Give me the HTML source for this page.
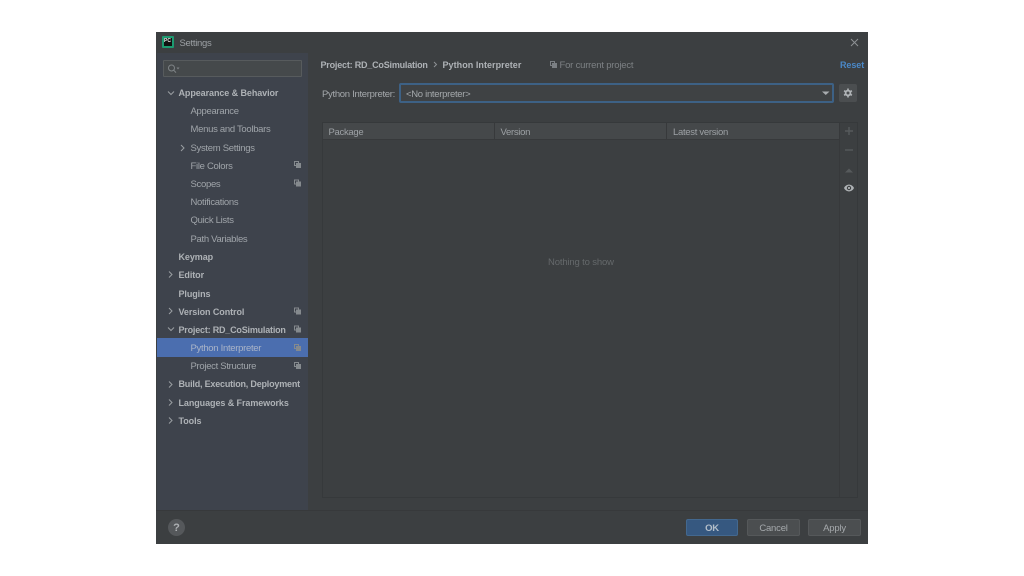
<!DOCTYPE html>
<html><head><meta charset="utf-8">
<style>
html,body{margin:0;padding:0;background:#fff;width:1024px;height:576px;overflow:hidden}
body{position:relative;font-family:"Liberation Sans","Noto Sans CJK KR",sans-serif;font-size:9.5px;color:#aab0b4}
.a{position:absolute}
.t{position:absolute;white-space:nowrap;line-height:12px;letter-spacing:-.3px;margin-top:1px;filter:blur(.25px)}
.b{font-weight:bold;font-size:9px;color:#aeb2b6;letter-spacing:-.08px;margin-top:0}
.s{color:#a0a5aa;margin-top:.5px}
svg{position:absolute;overflow:visible}
.btn{position:absolute;top:519px;height:17px;width:52px;border-radius:2px;background:#4b4e50;border:.5px solid #55585a;box-sizing:border-box;text-align:center;line-height:18px;color:#a5a9ac;letter-spacing:-.2px}
</style></head>
<body>
<div class="a" style="left:156px;top:32px;width:712px;height:512px;background:#3c3f41"></div>
<div class="a" style="left:157px;top:53px;width:151px;height:457px;background:#3e434c"></div>
<div class="a" style="left:156px;top:510px;width:712px;height:1px;background:#37393b"></div>

<div class="a" style="left:162px;top:36px;width:12px;height:12px;background:#1d9a70;border-radius:1px"></div>
<div class="a" style="left:164px;top:38px;width:8px;height:8px;background:#111;color:#eee;font-size:5px;font-weight:bold;line-height:6px;overflow:hidden">PC</div>
<div class="t" style="left:179.500px;top:37px;color:#9ca0a4">Settings</div>
<svg style="left:850px;top:38px" width="9" height="9"><path d="M1 1L8 8M8 1L1 8" stroke="#8d9194" stroke-width="1" fill="none"/></svg>

<div class="a" style="left:163px;top:60px;width:139px;height:17px;background:#45494b;border:1px solid #575b5d;box-sizing:border-box;border-radius:1px"></div>
<svg style="left:167px;top:64px" width="14" height="10"><circle cx="4.500" cy="4" r="3" stroke="#7f8487" stroke-width="1" fill="none"/><path d="M6.700 6.200L9 8.600" stroke="#7f8487"/><path d="M9.500 3.500h3l-1.500 2z" fill="#7f8487"/></svg>

<div class="a" style="left:157px;top:338px;width:151px;height:19px;background:#4b6eaf"></div>

<svg style="left:167px;top:89px" width="8" height="340" fill="none" stroke="#9a9ea2" stroke-width="1">
<path d="M1 2.500L4 5.500L7 2.500"/>
<path d="M2 182.500L5 185.500L2 188.500"/>
<path d="M2 219L5 222L2 225"/>
<path d="M1 238.500L4 241.500L7 238.500"/>
<path d="M2 292.500L5 295.500L2 298.500"/>
<path d="M2 310.500L5 313.500L2 316.500"/>
<path d="M2 328.500L5 331.500L2 334.500"/>
</svg>
<svg style="left:179px;top:144px" width="8" height="8" fill="none" stroke="#9a9ea2"><path d="M2 1L5 4L2 7"/></svg>

<div class="t b" style="left:178.500px;top:87px">Appearance &amp; Behavior</div>
<div class="t s" style="left:190.500px;top:105.500px">Appearance</div>
<div class="t s" style="left:190.500px;top:123.500px">Menus and Toolbars</div>
<div class="t s" style="left:190.500px;top:142px">System Settings</div>
<div class="t s" style="left:190.500px;top:160px">File Colors</div>
<div class="t s" style="left:190.500px;top:178px">Scopes</div>
<div class="t s" style="left:190.500px;top:196px">Notifications</div>
<div class="t s" style="left:190.500px;top:214.500px">Quick Lists</div>
<div class="t s" style="left:190.500px;top:233px">Path Variables</div>
<div class="t b" style="left:178.500px;top:251px">Keymap</div>
<div class="t b" style="left:178.500px;top:269px">Editor</div>
<div class="t b" style="left:178.500px;top:287.500px">Plugins</div>
<div class="t b" style="left:178.500px;top:305.500px">Version Control</div>
<div class="t b" style="left:178.500px;top:323.500px;letter-spacing:-.2px">Project: RD_CoSimulation</div>
<div class="t s" style="left:190.500px;top:342px;color:#aab4c8">Python Interpreter</div>
<div class="t s" style="left:190.500px;top:360px">Project Structure</div>
<div class="t b" style="left:178.500px;top:378px;letter-spacing:-.2px">Build, Execution, Deployment</div>
<div class="t b" style="left:178.500px;top:396.500px">Languages &amp; Frameworks</div>
<div class="t b" style="left:178.500px;top:415px">Tools</div>

<svg style="left:294px;top:161px" width="7" height="210" fill="none" stroke="#858a8e" stroke-width="1">
<g><rect x=".5" y=".5" width="4" height="4"/><rect x="2.500" y="2.500" width="4" height="4" fill="#858a8e"/></g>
<g transform="translate(0,18.500)"><rect x=".5" y=".5" width="4" height="4"/><rect x="2.500" y="2.500" width="4" height="4" fill="#858a8e"/></g>
<g transform="translate(0,146.500)"><rect x=".5" y=".5" width="4" height="4"/><rect x="2.500" y="2.500" width="4" height="4" fill="#858a8e"/></g>
<g transform="translate(0,164.500)"><rect x=".5" y=".5" width="4" height="4"/><rect x="2.500" y="2.500" width="4" height="4" fill="#858a8e"/></g>
<g transform="translate(0,183)"><rect x=".5" y=".5" width="4" height="4"/><rect x="2.500" y="2.500" width="4" height="4" fill="#858a8e"/></g>
<g transform="translate(0,201)"><rect x=".5" y=".5" width="4" height="4"/><rect x="2.500" y="2.500" width="4" height="4" fill="#858a8e"/></g>
</svg>

<div class="t b" style="left:320.500px;top:59px;letter-spacing:-.2px">Project: RD_CoSimulation</div>
<svg style="left:432px;top:61px" width="6" height="7" fill="none" stroke="#8d9194"><path d="M2 1L4.500 3.500L2 6"/></svg>
<div class="t b" style="left:442.500px;top:59px;letter-spacing:.05px">Python Interpreter</div>
<svg style="left:550px;top:61px" width="7" height="7" fill="none" stroke="#7b7f83"><rect x=".5" y=".5" width="4" height="4"/><rect x="2.500" y="2.500" width="4" height="4" fill="#7b7f83"/></svg>
<div class="t" style="left:559.500px;top:59px;color:#7d8184;letter-spacing:-.2px">For current project</div>
<div class="t b" style="left:840px;top:59px;color:#4a88c7">Reset</div>

<div class="t" style="left:322px;top:87.500px;color:#a5a9ac">Python Interpreter:</div>
<div class="a" style="left:399px;top:83px;width:435px;height:20px;box-sizing:border-box;border:2px solid #3d6185;border-radius:2px;background:#3f4244"></div>
<div class="t" style="left:406px;top:87.500px;color:#a5a9ac">&lt;No interpreter&gt;</div>
<svg style="left:822px;top:91px" width="8" height="5"><path d="M0 .5h7.500L3.750 4z" fill="#a8acaf"/></svg>
<div class="a" style="left:839px;top:84px;width:18px;height:18px;background:#4b4e50;border-radius:2px"></div>
<svg style="left:843px;top:88px" width="10" height="10"><path d="M5 .5v9M1.100 2.750l7.800 4.500M1.100 7.250l7.800-4.500" stroke="#b0b4b7" stroke-width="1.600"/><circle cx="5" cy="5" r="3.300" fill="#b0b4b7"/><circle cx="5" cy="5" r="1.500" fill="#4b4e50"/></svg>

<div class="a" style="left:322px;top:122px;width:536px;height:376px;box-sizing:border-box;border:1px solid #36393b"></div>
<div class="a" style="left:323px;top:123px;width:516px;height:17px;background:#45484a;border-bottom:1px solid #37393b;box-sizing:border-box"></div>
<div class="a" style="left:494px;top:123px;width:1px;height:17px;background:#37393b"></div>
<div class="a" style="left:666px;top:123px;width:1px;height:17px;background:#37393b"></div>
<div class="a" style="left:839px;top:123px;width:1px;height:374px;background:#37393b"></div>
<div class="t" style="left:328.500px;top:125.500px;color:#9da1a5">Package</div>
<div class="t" style="left:500.500px;top:125.500px;color:#9da1a5">Version</div>
<div class="t" style="left:673px;top:125.500px;color:#9da1a5">Latest version</div>

<svg style="left:844px;top:126px" width="11" height="68">
<path d="M5 1v8M1 5h8" stroke="#565a5c" stroke-width="1.400"/>
<path d="M1 24h8" stroke="#565a5c" stroke-width="1.400"/>
<path d="M1 46.500h8L5 42.500z" fill="#565a5c"/>
<path d="M0 62c2-4.500 8-4.500 10 0c-2 4.500-8 4.500-10 0z" fill="#aeb2b5"/><circle cx="5" cy="62" r="2.200" fill="#3c3f41"/><circle cx="5" cy="62" r="1.100" fill="#aeb2b5"/>
</svg>

<div class="t" style="left:548px;top:256px;color:#65696b;letter-spacing:-.15px">Nothing to show</div>

<div class="a" style="left:168px;top:519px;width:17px;height:17px;border-radius:50%;background:#55585b"></div>
<div class="t" style="left:168px;top:521px;width:17px;text-align:center;color:#aeb1b4;font-weight:bold;font-size:11px;letter-spacing:0">?</div>

<div class="btn" style="left:686px;background:#365880;border-color:#43688f;color:#b4bfca;font-weight:bold">OK</div>
<div class="btn" style="left:747px;width:53px">Cancel</div>
<div class="btn" style="left:808px;width:53px">Apply</div>
</body></html>
